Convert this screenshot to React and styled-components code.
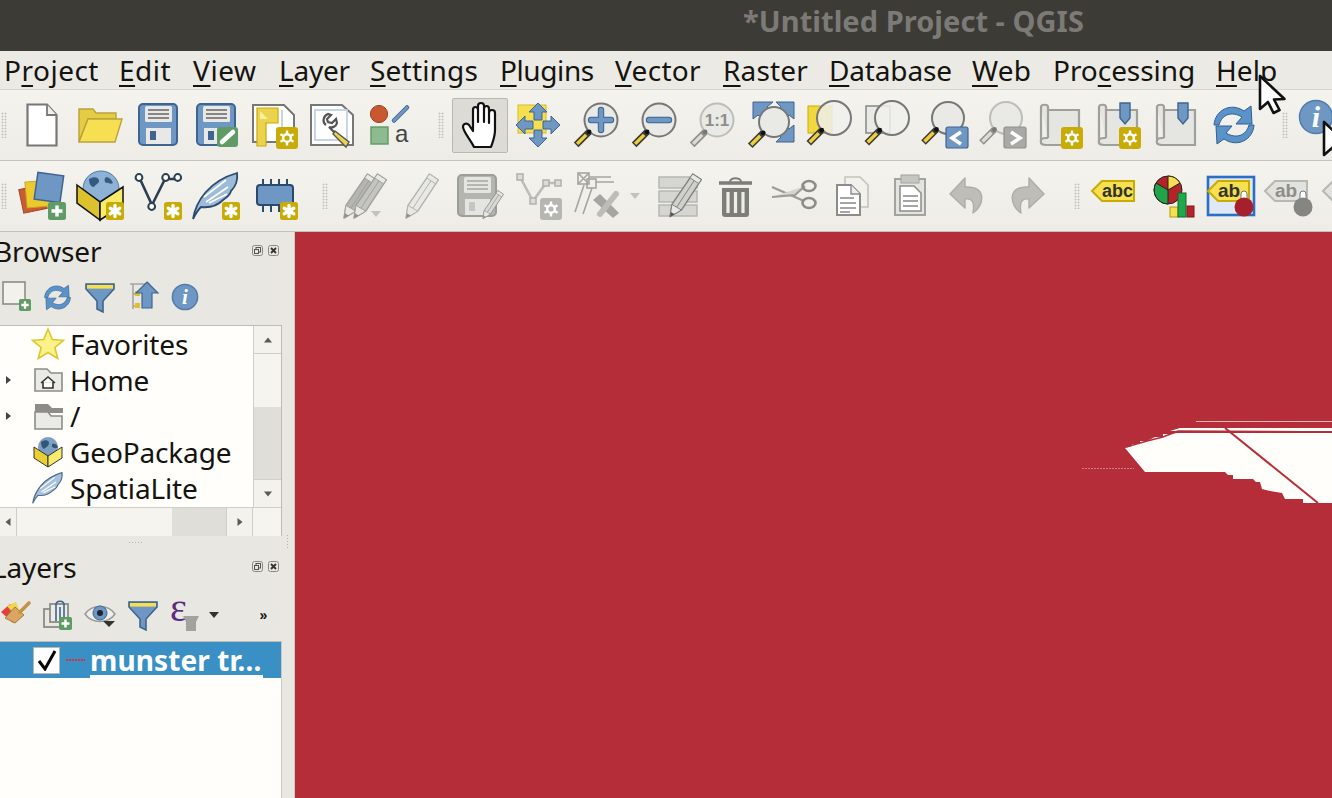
import React from "react";
import styled, { createGlobalStyle } from "styled-components";

const Global = createGlobalStyle`
  html, body { margin: 0; padding: 0; background: #e9e8e2; }
  body { font-family: "Noto Sans", "Open Sans", sans-serif; overflow: hidden; }
`;

const Win = styled.div`position: relative; width: 1332px; height: 798px; overflow: hidden; display: flex; flex-direction: column; background: #e9e8e2;`;
const TitleBar = styled.header`height: 51px; flex: none; background: #3c3b36; display: flex; align-items: center; padding: 0 0 10px 743px; box-sizing: border-box; color: #7b7a76; font: bold 29px "Noto Sans", sans-serif; white-space: nowrap; letter-spacing: 0.05px;`;
const MenuBar = styled.nav`height: 39px; flex: none; box-sizing: border-box; background: #ebeae4; border-bottom: 1px solid #d5d4ce; display: flex; align-items: center; padding-left: 4px; color: #14130f; font-size: 28px; white-space: nowrap;`;
const MenuItem = styled.span`width: ${p => p.$w}px; flex: none; display: block; letter-spacing: ${p => p.$ls}px;`;
const Key = styled.span`text-decoration: underline; text-decoration-thickness: 2px; text-underline-offset: 4px;`;
const ToolBar = styled.div`height: 71px; flex: none; box-sizing: border-box; display: flex; align-items: center; overflow: hidden; padding-left: 13px; position: relative; background: linear-gradient(#f4f3ee, #edece6); border-bottom: 1px solid #c3c2bc;`;
const ToolButton = styled.button`
  width: ${p => p.$w || 58}px; height: 56px; flex: none; margin: 0; padding: 0 0 0 4px; box-sizing: border-box;
  display: flex; align-items: center; font: inherit; background: transparent; border: 1px solid transparent;
`;
const ActiveTool = styled(ToolButton)`
  width: 56px; height: 55px; margin: 0 1px; padding-left: 3px;
  background: #dcdbd5; border-color: #b9b8b2; border-radius: 2px;
`;
const Sep = styled.span`flex: none; width: ${p => p.$w || 32}px; height: 28px; display: flex; padding-left: 19px; box-sizing: border-box;`;
const Grip = styled.i`display: block; width: 6px; height: 26px; margin: auto 0; background-image: radial-gradient(circle, #c6c5bf 0.9px, transparent 1.1px); background-size: 3px 3px;`;
const EdgeGrip = styled(Grip)`position: absolute; left: 1px; top: calc(50% - 13px);`;
const Caret = styled.i`display: block; flex: none; margin-left: ${p => p.$ml ?? 10}px; width: 0; height: 0; border-left: 5px solid transparent; border-right: 5px solid transparent; border-top: 6px solid ${p => p.$c || "#c3c2bd"};`;
const OverCaret = styled(Caret)`position: absolute; left: 35px; top: 42px; margin: 0;`;
const CaretTool = styled(ToolButton)`position: relative;`;

const Work = styled.main`flex: 1; display: flex; min-height: 0;`;
const Panel = styled.aside`width: 295px; flex: none; display: flex; flex-direction: column; background: #e8e7e1; border-right: 1px solid #c9c8c2; box-sizing: border-box;`;
const DockHead = styled.div`height: 40px; flex: none; width: 282px; display: flex; align-items: center; justify-content: space-between; box-sizing: border-box; padding-right: 3px; color: #14130f; font-size: 28px;`;
const DockTitle = styled.span`margin: -3px 0 0 ${p => p.$ml}px; letter-spacing: -0.15px;`;
const DockBtns = styled.span`display: flex; gap: 5px; margin-top: -4px;`;
const DockBtn = styled.svg`width: 11px; height: 11px; display: block;`;
const DockBar = styled.div`height: 53px; flex: none; display: flex; align-items: center; margin-left: -6px; width: 287px; padding-bottom: ${p => p.$pb || 0}px; box-sizing: border-box;`;
const DockTool = styled.span`width: 42.5px; flex: none; display: flex; justify-content: center;`;
const More = styled.span`margin-left: 41px; font: bold 14px "Liberation Sans", sans-serif; color: #111;`;
const TreeBox = styled.div`width: 282px; flex: none; box-sizing: border-box; height: 211px; background: #fffefb; border: 1px solid #bcbbb5; border-left: none; display: grid; grid-template-columns: 1fr 28px; grid-template-rows: 1fr 29px;`;
const TreeList = styled.ul`list-style: none; margin: 0; padding: 0; overflow: hidden;`;
const TreeRow = styled.li`height: 36px; display: flex; align-items: center; font-size: 28px; color: #14130f; letter-spacing: -0.15px; white-space: nowrap;`;
const Expander = styled.span`width: 32px; flex: none; display: flex; padding-left: 6px; box-sizing: border-box;`;
const Tri = styled.i`display: block; width: 0; height: 0; border-top: 4.5px solid transparent; border-bottom: 4.5px solid transparent; border-left: 5px solid #444;`;
const RowLabel = styled.span`margin-left: 6px;`;
const VScroll = styled.div`display: grid; grid-template-rows: 28px 53px 72px 1fr 28px; background: #f5f4ef; border-left: 1px solid #cfcec8;`;
const HScroll = styled.div`grid-column: 1 / 3; display: grid; grid-template-columns: 17px 155px 54px 27px 1fr; background: #f5f4ef; border-top: 1px solid #cfcec8;`;
const SBtn = styled.span`display: flex; align-items: center; justify-content: center; background: #f3f2ec; box-sizing: border-box; border: 0 solid #cfcec8; border-width: ${p => p.$b || "0"};`;
const SThumb = styled.span`background: #dfded8; display: block;`;
const STrack = styled.span`display: block;`;
const Splitter = styled.div`height: 12px; flex: none; display: flex; align-items: center;`;
const HDots = styled.i`display: block; margin-left: 128px; width: 16px; height: 3px; background-image: radial-gradient(circle, #b4b3ad 0.8px, transparent 1px); background-size: 3px 3px;`;
const VDots = styled.i`display: block; margin-left: auto; margin-right: 5px; width: 3px; height: 16px; background-image: radial-gradient(circle, #b4b3ad 0.8px, transparent 1px); background-size: 3px 3px;`;
const LayerTree = styled.div`flex: 1; width: 282px; background: #fffefb; border-top: 1px solid #bcbbb5; border-right: 1px solid #c9c8c2; box-sizing: border-box;`;
const LayerRow = styled.div`height: 36px; background: #3a8fc5; display: flex; align-items: center; padding-left: 33px; box-sizing: border-box;`;
const Check = styled.span`width: 27px; height: 27px; flex: none; box-sizing: border-box; background: #fff; border: 1px solid #b8b7b1; display: flex; align-items: center; justify-content: center;`;
const Legend = styled.i`display: block; width: 19px; height: 2px; margin-left: 6px; flex: none; background: repeating-linear-gradient(90deg, #b7414f 0 2px, #7f6aa8 2px 3px);`;
const LayerName = styled.span`margin: 3px 0 0 5px; width: 173px; flex: none; height: 33px; box-sizing: border-box; border-bottom: 3px solid #fff; color: #fff; font: bold 28px/31px "Noto Sans", sans-serif; letter-spacing: 0.1px; white-space: nowrap; overflow: hidden;`;
const Canvas = styled.section`flex: 1; background: #b52d38; min-width: 0;`;
const MapSvg = styled.svg`display: block; width: 100%; height: 100%;`;
const IconSvg = styled.svg`display: block; flex: none; width: ${p => p.$s}px; height: ${p => p.$s}px; overflow: visible;`;
const Pointer = styled.svg`position: absolute; left: ${p => p.$x}px; top: ${p => p.$y}px; width: 28px; height: 40px; overflow: visible;`;
const IconText = styled.text`font-family: "Liberation Sans", sans-serif; font-weight: ${p => p.$w || 700}; font-size: ${p => p.$s}px;`;
const SerifGlyph = styled.text`font-family: "Liberation Serif", serif; font-size: ${p => p.$s}px;`;

const BLUE = "#6e97c3", DBLUE = "#3f648f", YEL = "#f6e04f", BADGE = "#c9ab05", GRN = "#5f9b65", G = "#a9a9a5";

const I = ({ s = 48, v = 48, children }) => <IconSvg $s={s} viewBox={`0 0 ${v} ${v}`}>{children}</IconSvg>;

const StarB = ({ x = 30, y = 30, n = 18 }) => (
  <g transform={`translate(${x} ${y}) scale(${n / 18})`}>
    <rect width="18" height="18" rx="2.5" fill={BADGE} />
    <g stroke="#fff" strokeWidth="3.3" strokeLinecap="round">
      <line x1="9" y1="3.5" x2="9" y2="14.5" /><line x1="4.2" y1="6.2" x2="13.8" y2="11.8" /><line x1="4.2" y1="11.8" x2="13.8" y2="6.2" />
    </g>
  </g>
);
const GearB = ({ x = 26, y = 26, n = 22, c = BADGE }) => (
  <g transform={`translate(${x} ${y}) scale(${n / 22})`}>
    <rect width="22" height="22" rx="3" fill={c} />
    <g stroke="#fff" strokeWidth="2.4"><line x1="11" y1="3.5" x2="11" y2="18.5" /><line x1="4.5" y1="7.2" x2="17.5" y2="14.8" /><line x1="4.5" y1="14.8" x2="17.5" y2="7.2" /></g>
    <circle cx="11" cy="11" r="3.8" fill={c} stroke="#fff" strokeWidth="2.4" />
  </g>
);
const PlusB = ({ x = 30, y = 30, n = 18 }) => (
  <g transform={`translate(${x} ${y}) scale(${n / 18})`}>
    <rect width="18" height="18" rx="2.5" fill={GRN} />
    <path d="M9 3.5v11M3.5 9h11" stroke="#fff" strokeWidth="3.4" />
  </g>
);
const Lens = ({ x, y, r = 16.5, off, fill = "#e9e9e5", children }) => {
  const hx = x - r * 0.72, hy = y + r * 0.72;
  return (
    <g>
      <line x1={hx} y1={hy} x2={hx - 13} y2={hy + 13} stroke={off ? "#8f8f8b" : "#3a3a36"} strokeWidth="6.5" />
      <line x1={hx - 3} y1={hy + 3} x2={hx - 12} y2={hy + 12} stroke={off ? "#dcdcd8" : "#f0cf3c"} strokeWidth="3.4" />
      <circle cx={x} cy={y} r={r} fill={fill} stroke={off ? "#bdbdb9" : "#777"} strokeWidth="2" />
      <circle cx={hx} cy={hy} r="2.4" fill={off ? "#777" : "#111"} />
      {children}
    </g>
  );
};
const Disk = ({ c = BLUE, d = DBLUE, inner = "#e8e8e6", mark = DBLUE, line = "#666" }) => (
  <g>
    <rect x="5" y="3" width="38" height="41" rx="4" fill={c} stroke={d} strokeWidth="2" />
    <rect x="11" y="5" width="27" height="16" rx="1.5" fill={inner} />
    <path d="M14 9h21M14 13h21M14 17h21" stroke={line} strokeWidth="1.6" />
    <rect x="12" y="27" width="25" height="16" fill={inner} />
    <rect x="16" y="30" width="6" height="9" fill={mark} />
  </g>
);
const Scroll = () => (
  <path d="M5 6c0-3 7-3 7 0v3h31v35H10c-7 0-7-7 0-7h2M5 6v33M12 6v31" fill="#e5e5e1" stroke="#9f9f9b" strokeWidth="2.2" />
);
const RefreshArt = ({ c = "#5b92c9", d = "#2f5f94" }) => (
  <g fill={c} stroke={d} strokeWidth="1">
    <path d="M4 24C5 9 21 1 34 10l7-5 1 18H26l6-7C22 10 12 13 9 24Z" />
    <path d="M44 24C43 39 27 47 14 38l-7 5-1-18h16l-6 7c10 6 20 3 23-8Z" />
  </g>
);
const FilterArt = () => (
  <g>
    <path d="M2 3h28v5L19 20v11l-6-3v-8L2 8Z" fill={BLUE} stroke={DBLUE} strokeWidth="1.6" />
    <rect x="3" y="4" width="26" height="3.6" fill={YEL} />
  </g>
);
const InfoArt = ({ cx = 24, cy = 24, r = 16, fs = 28 }) => (
  <g>
    <circle cx={cx} cy={cy} r={r} fill={BLUE} stroke="#537bab" strokeWidth="1.5" />
    <text x={cx} y={cy + fs * 0.33} textAnchor="middle" fontFamily="Liberation Serif, serif" fontStyle="italic" fontWeight="700" fontSize={fs} fill="#fff">i</text>
  </g>
);
const FeatherArt = ({ fill = "#9dbcd9", s = "#2c4a6e" }) => (
  <g>
    <path d="M1 47C4 29 17 9 45 1c1 7-2 14-6 18-1 4-5 7-8 9-6 6-14 8-22 7-3 3-6 8-8 12Z" fill={fill} stroke={s} strokeWidth="1.8" />
    <path d="M14 30l22-15M17 31l18-9M12 25l22-17" stroke="#fff" strokeWidth="1.6" />
  </g>
);
const PencilArt = ({ x = 0, y = 0, k = 1, c = "#c5c5c1", d = "#a0a09c", tip = "#8f8f8b" }) => (
  <g transform={`translate(${x} ${y}) scale(${k})`}>
    <path d="M0 46L2 33L24 1L33 7L12 39Z" fill={c} stroke={d} strokeWidth="1.4" strokeLinejoin="round" />
    <path d="M7 36L28 4" stroke={d} strokeWidth="1" />
    <path d="M24 1L33 7L30 11L21 5Z" fill="#e8e8e4" stroke={d} strokeWidth="1" />
    <path d="M2 33l10 6-12 7Z" fill="#e8e8e4" stroke={d} strokeWidth="1" />
    <path d="M0 46l1-5 4 2.5Z" fill={tip} />
  </g>
);

/* top row */
const NewFile = () => <I><path d="M9.5 3.5H29L38.5 14v30.5h-29Z" fill="#fff" stroke="#777" strokeWidth="2.2" /><path d="M29 3.5V14h9.5" fill="#eee" stroke="#777" strokeWidth="1.8" /></I>;
const Folder = () => <I><path d="M3 41V8h14l3 4h20v6H12Z" fill="#e6cc45" stroke="#b9a23c" strokeWidth="1.4" /><path d="M3 41l9-23h34l-7 23Z" fill="#f6e052" stroke="#b9a23c" strokeWidth="1.4" /></I>;
const Save = () => <I><Disk /></I>;
const SaveAs = () => <I><Disk /><rect x="25" y="26" width="21" height="20" rx="3" fill={GRN} /><path d="M30 41l11-10" stroke="#fff" strokeWidth="4.5" strokeLinecap="round" /></I>;
const NewLayout = () => <I><path d="M3 4h31l10 10v27H3Z" fill="#fff" stroke="#777" strokeWidth="2" /><path d="M32 9v22" stroke="#c2d1e7" strokeWidth="1.8" /><path d="M7 7h21v15H16v23H7Z" fill="#ecd34e" stroke="#c9ab05" strokeWidth="1.2" /><path d="M10 10l8 8h-8Z" fill="#f8eda0" /><GearB x="26" y="26" /></I>;
const Manager = () => <I><path d="M3 4h31l11 10v30H3Z" fill="#fff" stroke="#777" strokeWidth="2" /><rect x="7" y="9" width="32" height="30" fill="none" stroke="#c2d1e7" strokeWidth="1.8" /><path d="M18 24c-4-3-3-9 2-11l3 1-4 4 1 3 4 1 4-4 1 4c-1 4-5 5-8 4l15 15" fill="none" stroke="#555" strokeWidth="2.2" /><path d="M27 30l14 11-3 5-13-13Z" fill="#ecd34e" stroke="#555" strokeWidth="1.4" /></I>;
const Style = () => <I><circle cx="13" cy="13" r="8.6" fill="#c9582f" stroke="#9a4426" strokeWidth="1" /><line x1="28" y1="19.5" x2="41" y2="6.5" stroke={DBLUE} strokeWidth="4.5" strokeLinecap="round" /><line x1="28" y1="19.5" x2="41" y2="6.5" stroke={BLUE} strokeWidth="2.8" strokeLinecap="round" /><rect x="5" y="26" width="17" height="17" fill="#8fb98f" stroke="#5f9b65" strokeWidth="1.4" /><IconText $s={24} $w={400} x="29" y="41" fill="#444">a</IconText></I>;
const Hand = () => <I><path d="M18 46C15 40 7 30 7 26c0-4 4-4 6-2l4 6V9c0-4 5-4 5 0v12V5c0-4 6-4 6 0v16V8c0-4 5-4 5 0v14V12c0-4 6-4 6 0v17c0 7-2 11-4 17Z" fill="#fff" stroke="#111" strokeWidth="2.2" strokeLinejoin="round" /></I>;
const PanSel = () => { const a = "M24 2l9 9h-5v8h-8v-8h-5Z"; return <I><rect x="4" y="4" width="28" height="28" fill={YEL} stroke="#d4b92f" strokeWidth="1" /><g fill={BLUE} stroke={DBLUE} strokeWidth="1"><path d={a} /><path d={a} transform="rotate(90 24 24)" /><path d={a} transform="rotate(180 24 24)" /><path d={a} transform="rotate(270 24 24)" /></g></I>; };
const ZoomIn = () => <I><Lens x={29} y={19}><path d="M29 9v20M19 19h20" stroke={DBLUE} strokeWidth="6.4" strokeLinecap="round" /><path d="M29 9v20M19 19h20" stroke={BLUE} strokeWidth="4.4" strokeLinecap="round" /></Lens></I>;
const ZoomOut = () => <I><Lens x={29} y={19}><path d="M19 19h20" stroke={DBLUE} strokeWidth="6.4" strokeLinecap="round" /><path d="M19 19h20" stroke={BLUE} strokeWidth="4.4" strokeLinecap="round" /></Lens></I>;
const Zoom11 = () => <I><Lens x={29} y={19} off><IconText $s={17} x="29" y="25" textAnchor="middle" fill="#8d8d89">1:1</IconText></Lens></I>;
const ZoomFull = () => <I><g fill={BLUE} stroke={DBLUE} strokeWidth="1"><path d="M7 1h20l-6 5 5 5-9 8-5-5-5 4Z" /><path d="M48 1H30l5 5-5 5 8 8 5-5 5 4Z" /><path d="M48 41H30l5-5-5-5 8-8 5 5 5-4Z" /></g><Lens x={28} y={21} r={15} /></I>;
const ZoomSel = () => <I><rect x="4" y="5" width="24" height="27" fill="#f0d83e" stroke="#c9ab05" strokeWidth="1" /><Lens x={30} y={17} r={17} fill="rgba(240,240,236,0.85)" /></I>;
const ZoomLayer = () => <I><rect x="4" y="5" width="24" height="27" fill="#e9e9e5" stroke="#8d8d89" strokeWidth="1.6" /><Lens x={30} y={17} r={17} fill="rgba(240,240,236,0.85)" /></I>;
const ZoomLast = () => <I><Lens x={28} y={17} r={16} /><rect x="26" y="26" width="22" height="21" rx="2" fill={BLUE} stroke={DBLUE} strokeWidth="1.2" /><path d="M41 31l-9 6 9 6" fill="none" stroke="#fff" strokeWidth="3.6" /></I>;
const ZoomNext = () => <I><Lens x={28} y={17} r={16} off /><rect x="26" y="26" width="22" height="21" rx="2" fill={G} stroke="#8f8f8b" strokeWidth="1.2" /><path d="M33 31l9 6-9 6" fill="none" stroke="#fff" strokeWidth="3.6" /></I>;
const NewMap = () => <I><Scroll /><GearB x={25} y={26} /></I>;
const NewMark = () => <I><Scroll /><path d="M26 2h10v15l-5 6-5-6Z" fill={BLUE} stroke={DBLUE} strokeWidth="1.4" /><GearB x={25} y={26} /></I>;
const Marks = () => <I><Scroll /><path d="M26 2h10v15l-5 6-5-6Z" fill={BLUE} stroke={DBLUE} strokeWidth="1.4" /></I>;
const Refresh = () => <I><RefreshArt /></I>;
const Info = () => <I><InfoArt cx={18} cy={16} r={16.5} fs={30} /></I>;

/* second row */
const AddLayers = () => <I><rect x="3" y="15" width="24" height="24" transform="rotate(-12 15 27)" fill="#cc5a30" stroke="#a4472a" /><rect x="8" y="9" width="24" height="26" transform="rotate(-5 20 22)" fill="#ecc92f" stroke="#c2a32b" /><rect x="18" y="2" width="26" height="27" transform="rotate(8 31 15)" fill={BLUE} stroke={DBLUE} strokeWidth="1.5" /><PlusB /></I>;
const GeoBox = () => <I><circle cx="25" cy="17" r="18" fill="#8eb2d6" stroke="#56789c" /><path d="M13 7c5-3 9-2 10 1 1 3-3 4-5 7-3 0-5-3-5-8ZM30 5c3 0 6 3 7 6-3 2-4-1-7 0-2-2-2-4 0-6Z" fill="#355a80" /><path d="M1 13l23 17v18L1 31Z" fill="#dcc22c" stroke="#111" strokeWidth="1.5" /><path d="M24 30l23-15v18L24 48Z" fill="#f9ec6c" stroke="#111" strokeWidth="1.5" /><StarB /></I>;
const NewVec = () => <I><path d="M6 7l12 26L31 7h11" fill="none" stroke="#2b3e52" strokeWidth="2.6" /><g fill="#fff" stroke="#2b3e52" strokeWidth="2"><circle cx="5" cy="5.5" r="3.4" /><circle cx="17.7" cy="34.5" r="3.4" /><circle cx="31.7" cy="5.5" r="3.4" /><circle cx="43.7" cy="5.5" r="3.4" /></g><StarB /></I>;
const Feather = () => <I><FeatherArt /><StarB /></I>;
const Chip = () => <I><path d="M13 7v6M21 7v6M29 7v6M37 7v6M13 33v7M21 33v7M29 33v7M37 33v7" stroke="#2a4a70" strokeWidth="2" /><rect x="7" y="13" width="36" height="20" rx="3" fill={BLUE} stroke="#2a4a70" strokeWidth="2" /><StarB /></I>;
const Pencils = () => <I><PencilArt x={4} y={1} k={0.98} c="#b5b5b1" /><PencilArt x={14} y={1} k={0.98} c="#c4c4c0" /></I>;
const Pencil = () => <I><PencilArt x={8} y={1} k={0.98} c="#e8e8e4" d="#b1b1ad" /></I>;
const SaveEdit = () => <I><g transform="translate(-3 0)"><Disk c="#b4b4b0" d="#9d9d99" inner="#e4e4e0" mark="#c5c5c1" line="#a5a5a1" /></g><PencilArt x={27} y={18} k={0.62} c="#d8d8d4" d="#8f8f8b" /></I>;
const NodeTool = () => <I><path d="M6 5l13 24L32 11h14" fill="none" stroke="#bcbcb8" strokeWidth="2.6" /><g fill="#dcdcd8" stroke="#b0b0ac" strokeWidth="1.5"><rect x="3" y="2" width="6" height="6" /><rect x="16" y="26" width="6" height="6" /><rect x="29" y="8" width="6" height="6" /><rect x="41" y="8" width="6" height="6" /></g><GearB x={26} y={26} c="#b6b6b2" /></I>;
const VertTool = () => <I><g stroke="#a5a5a1" strokeWidth="1.6" fill="none"><rect x="6" y="1" width="11" height="11" /><rect x="15" y="7" width="9" height="9" /><path d="M6 1l11 11M17 1L6 12M12 13L3 40M20 16L11 42M17 5h22M24 10h18" /></g><path d="M21 28l7-6 19 19-6 5Z" fill="#a5a5a1" /><path d="M44 22l-16 20" stroke="#bcbcb8" strokeWidth="6" strokeLinecap="round" /></I>;
const Attr = () => <I><g fill="#d5d5d1" stroke="#b6b6b2" strokeWidth="1.5"><rect x="5" y="5" width="38" height="11" /><rect x="5" y="19" width="38" height="11" /><rect x="5" y="33" width="38" height="11" /></g><PencilArt x={16} y={1} k={0.95} c="#d0d0cc" d="#7e7e7a" tip="#555" /></I>;
const Trash = () => <I><path d="M7 11h33" stroke="#7d7d79" strokeWidth="3.5" /><path d="M18 10c0-5 11-5 11 0" fill="none" stroke="#7d7d79" strokeWidth="2" /><path d="M10 16h27v26c0 2-1 3-3 3H13c-2 0-3-1-3-3Z" fill="#7d7d79" /><path d="M16 20v21M23.5 20v21M31 20v21" stroke="#efeee8" strokeWidth="3.2" /></I>;
const Scissors = () => <I><path d="M2 15l32 14" stroke="#9b9b97" strokeWidth="2.2" /><path d="M2 25l23-2 10-9" fill="#d5d5d1" stroke="#9b9b97" strokeWidth="2" /><ellipse cx="39" cy="14" rx="6.5" ry="5" fill="none" stroke="#8c8c88" strokeWidth="2.6" /><ellipse cx="39" cy="31" rx="6.5" ry="5" fill="none" stroke="#8c8c88" strokeWidth="2.6" /></I>;
const Copy = () => <I><path d="M17 5h15l8 8v22H17Z" fill="#f2f1ec" stroke="#c3c3bf" strokeWidth="1.6" /><path d="M9 13h14l9 9v21H9Z" fill="#fff" stroke="#8c8c88" strokeWidth="2" /><path d="M23 13v9h9" fill="#eee" stroke="#8c8c88" strokeWidth="1.4" /><path d="M12 26h14M12 31h16M12 36h16M12 40h10" stroke="#888" strokeWidth="1.3" /></I>;
const Paste = () => <I><rect x="9" y="7" width="30" height="36" fill="#e3e3df" stroke="#a2a29e" strokeWidth="2" /><rect x="15" y="3" width="18" height="8" fill="#c5c5c1" stroke="#a2a29e" /><path d="M14 14h14l7 7v18H14Z" fill="#fff" stroke="#8c8c88" strokeWidth="1.5" /><path d="M17 24h15M17 29h15M17 34h15" stroke="#888" strokeWidth="1.3" /></I>;
const UNDO = "M21 6L6 22L21 36V27C28 26 31 30 29 41C40 34 44 14 21 15Z";
const Undo = () => <I><path d={UNDO} fill="#bebdb8" stroke="#adada9" strokeWidth="1.4" strokeLinejoin="round" /></I>;
const Redo = () => <I><g transform="matrix(-1 0 0 1 48 0)"><path d={UNDO} fill="#bebdb8" stroke="#adada9" strokeWidth="1.4" strokeLinejoin="round" /></g></I>;
const Tag = ({ label, fill, s, tc, x = 2, w = 42, fs = 19 }) => (
  <g transform="translate(0 8)"><path d={`M${x} 11L${x + 10} 1h${w - 10}v20H${x + 10}Z`} fill={fill} stroke={s} strokeWidth="2" /><IconText $s={fs} x={x + 10} y="17" fill={tc}>{label}</IconText></g>
);
const Abc = () => <I><Tag label="abc" fill={YEL} s="#c9ab05" tc="#33322c" fs={18} /></I>;
const Diagram = () => <I><circle cx="20" cy="18" r="14" fill="#b3232a" stroke="#222" /><path d="M20 18V4a14 14 0 0 1 12 7Z" fill={YEL} stroke="#222" /><path d="M20 18L8 11A14 14 0 0 0 20 32Z" fill="#22a34a" stroke="#222" /><rect x="22" y="35" width="8" height="10" fill={YEL} stroke="#b89a0a" /><rect x="30" y="21" width="8" height="24" fill="#1fa84c" stroke="#11682e" /><rect x="39" y="34" width="7" height="11" fill="#b8232b" stroke="#7b181c" /></I>;
const Pin = ({ c, x }) => <g><rect x={x - 3} y="19" width="6" height="12" rx="3" fill="#fff" stroke="#777" /><circle cx={x} cy="35" r="9.5" fill={c} /></g>;
const PinLabel = () => <I><rect x="2" y="5" width="46" height="38" fill="#dfe8f4" stroke="#2b6fc4" strokeWidth="2.6" /><Tag label="ab" fill={YEL} s="#c9ab05" tc="#33322c" x={2} w={41} /><Pin c="#a61f2c" x={38} /></I>;
const GreyLabel = () => <I><Tag label="ab" fill="#e2e2de" s="#b8b8b4" tc="#8d8d89" x={1} w={42} /><Pin c="#858581" x={39} /></I>;
const ClipLabel = () => <I><Tag label="ab" fill="#e2e2de" s="#b8b8b4" tc="#8d8d89" x={1} w={42} /></I>;

/* panels */
const AddFav = () => <I s={32} v={32}><rect x="4" y="1" width="22" height="22" fill="#f2f1ec" stroke="#8c8c88" strokeWidth="1.6" /><PlusB x={20} y={18} n={12} /></I>;
const Refresh32 = () => <I s={31}><RefreshArt /></I>;
const Filter32 = ({ s = 32 }) => <I s={s} v={32}><FilterArt /></I>;
const Collapse = () => <I s={32} v={32}><path d="M3 3h20M6 3v25M6 13h7M6 25h7" stroke="#a5a5a1" strokeWidth="1.6" fill="none" /><rect x="8" y="10" width="5" height="5" fill="#e5bd2b" /><rect x="8" y="22" width="5" height="5" fill="#e5bd2b" /><path d="M20 1l11 11h-6v15h-10V12H9Z" fill={BLUE} stroke={DBLUE} strokeWidth="1.2" /></I>;
const Info28 = () => <I s={32} v={32}><InfoArt cx={16} cy={16} r={12.6} fs={21} /></I>;
const StarT = () => <I s={32} v={32}><path d="M16 1l4.3 10.5 11.2.8-8.6 7.2 2.8 11L16 24.5 6.3 30.5l2.8-11L.5 12.3l11.2-.8Z" fill="#fbf28a" stroke="#dcc62c" strokeWidth="1.6" /></I>;
const HomeT = () => <I s={32} v={32}><path d="M3 5h12l4 4h11v18H3Z" fill="#ebebe6" stroke="#8c8c88" strokeWidth="1.6" /><path d="M9 19l7-6 7 6M11 18v6h10v-6" fill="#fff" stroke="#333" strokeWidth="1.6" /></I>;
const RootT = () => <I s={32} v={32}><path d="M3 4h13l4 4h11v5H3Z" fill="#8c8c88" /><path d="M3 12h13l3 4h11v13H3Z" fill="#ebebe6" stroke="#8c8c88" strokeWidth="1.6" /></I>;
const GeoT = () => <I s={32} v={32}><circle cx="16" cy="11" r="10" fill="#7e9fc4" /><path d="M9 6c4-3 8-2 8 1s-3 4-5 6c-2-1-3-4-3-7ZM20 8c3-1 5 1 6 3-2 2-4 1-6 0Z" fill="#34557a" /><path d="M2 11l14 9v11L2 22Z" fill="#e9cf32" stroke="#333" /><path d="M16 20l14-9v11l-14 9Z" fill="#f9ec6c" stroke="#333" /></I>;
const FeatherT = () => <I s={32}><FeatherArt fill="#a9c2dc" s="#4f6d90" /></I>;
const Brush = () => <I s={32} v={32}><path d="M2 13l9-8 6 5-3 14Z" fill="#e2403a" /><path d="M8 7l9-4 3 8-6 3Z" fill="#f1d54a" /><path d="M6 19l10-11 9 8-9 8Z" fill="#d9a663" stroke="#a97b3c" /><path d="M21 13l9-9" stroke="#c49346" strokeWidth="3.6" strokeLinecap="round" /></I>;
const AddGroup = () => <I s={32} v={32}><rect x="2" y="10" width="18" height="18" fill="none" stroke="#8c8c88" strokeWidth="1.8" /><rect x="8" y="5" width="18" height="18" fill="#ecebe6" stroke="#8c8c88" strokeWidth="1.8" /><path d="M14 22V6c0-5 8-5 8 0v15c0 3-4 3-4 0V8" fill="none" stroke={DBLUE} strokeWidth="1.6" /><PlusB x={17} y={18} n={13} /></I>;
const Eye = () => <I s={32} v={32}><path d="M1 15C8 5 24 5 31 15 24 25 8 25 1 15Z" fill="#f0efea" stroke="#9b9b97" strokeWidth="1.6" /><circle cx="16" cy="14" r="7" fill={BLUE} stroke={DBLUE} /><circle cx="16" cy="14" r="3" fill="#223" /><path d="M19 22h12l-6 6Z" fill="#333" /></I>;
const Expr = () => <I s={32} v={32}><SerifGlyph $s={40} x="1" y="22" fill="#5c2c7e">ε</SerifGlyph><path d="M14 17h16l-3 6v9h-10v-9Z" fill="#a2a29e" /></I>;

const ToolRow1 = [NewFile, Folder, Save, SaveAs, NewLayout, Manager, Style];
const ToolRow2 = [PanSel, ZoomIn, ZoomOut, Zoom11, ZoomFull, ZoomSel, ZoomLayer, ZoomLast, ZoomNext, NewMap, NewMark, Marks, Refresh];

const Tools = ({ list }) => list.map((C, i) => <ToolButton key={i}><C /></ToolButton>);

const Dock = () => (
  <DockBtns>
    <DockBtn viewBox="0 0 11 11"><rect x=".5" y=".5" width="10" height="10" rx="2" fill="none" stroke="#8a8983" /><rect x="4" y="2.5" width="4.5" height="4.5" fill="none" stroke="#55544f" /><rect x="2.5" y="4.5" width="4" height="4" fill="#e8e7e1" stroke="#55544f" /></DockBtn>
    <DockBtn viewBox="0 0 11 11"><rect x=".5" y=".5" width="10" height="10" rx="2" fill="none" stroke="#8a8983" /><path d="M3 3l5 5M8 3L3 8" stroke="#33322e" strokeWidth="1.8" /></DockBtn>
  </DockBtns>
);
const Arrow = ({ d }) => <svg width="10" height="10" viewBox="0 0 10 10"><path d={d} fill="#5a5a56" /></svg>;

const menu = [
  ["P", "r", "oject", 115, 0.5], ["", "E", "dit", 74, 0.45], ["", "V", "iew", 86, 0.6], ["", "L", "ayer", 91, -0.25], ["", "S", "ettings", 130, 0.2],
  ["", "P", "lugins", 115, -0.4], ["", "V", "ector", 108, 0.3], ["", "R", "aster", 106, 0.15], ["", "D", "atabase", 143, -0.15], ["", "W", "eb", 81, 0.3],
  ["Pro", "c", "essing", 163, -0.05], ["", "H", "elp", 100, 0.1],
];

const Cursor = ({ x, y }) => (
  <Pointer $x={x} $y={y} viewBox="0 0 28 40"><path d="M1 1v33l8-7 5.5 11 6-3L15 24.5l10.5-.5Z" fill="#fff" stroke="#111" strokeWidth="2.6" strokeLinejoin="round" /></Pointer>
);

export default function App() {
  return (
    <Win>
      <Global />
      <TitleBar>*Untitled Project - QGIS</TitleBar>
      <MenuBar>
        {menu.map(([a, k, b, w, ls], i) => (
          <MenuItem key={i} $w={w} $ls={ls}>{a}<Key>{k}</Key>{b}</MenuItem>
        ))}
      </MenuBar>
      <ToolBar>
        <EdgeGrip />
        <Tools list={ToolRow1} />
        <Sep><Grip /></Sep>
        <ActiveTool><Hand /></ActiveTool>
        <Tools list={ToolRow2} />
        <Sep $w={30}><Grip /></Sep>
        <ToolButton><Info /></ToolButton>
      </ToolBar>
      <ToolBar>
        <EdgeGrip />
        <Tools list={[AddLayers, GeoBox, NewVec, Feather, Chip]} />
        <Sep><Grip /></Sep>
        <CaretTool><Pencils /><OverCaret /></CaretTool>
        <Tools list={[Pencil, SaveEdit, NodeTool]} />
        <ToolButton $w={82}><VertTool /><Caret $ml={10} /></ToolButton>
        <Tools list={[Attr, Trash, Scissors, Copy, Paste, Undo, Redo]} />
        <Sep $w={30}><Grip /></Sep>
        <Tools list={[Abc, Diagram, PinLabel, GreyLabel, ClipLabel]} />
      </ToolBar>
      <Work>
        <Panel>
          <DockHead><DockTitle $ml={-6}>Browser</DockTitle><Dock /></DockHead>
          <DockBar $pb={3}>
            <DockTool><AddFav /></DockTool><DockTool><Refresh32 /></DockTool><DockTool><Filter32 /></DockTool><DockTool><Collapse /></DockTool><DockTool><Info28 /></DockTool>
          </DockBar>
          <TreeBox>
            <TreeList>
              <TreeRow><Expander /><StarT /><RowLabel>Favorites</RowLabel></TreeRow>
              <TreeRow><Expander><Tri /></Expander><HomeT /><RowLabel>Home</RowLabel></TreeRow>
              <TreeRow><Expander><Tri /></Expander><RootT /><RowLabel>/</RowLabel></TreeRow>
              <TreeRow><Expander /><GeoT /><RowLabel>GeoPackage</RowLabel></TreeRow>
              <TreeRow><Expander /><FeatherT /><RowLabel>SpatiaLite</RowLabel></TreeRow>
            </TreeList>
            <VScroll>
              <SBtn $b="0 0 1px 0"><Arrow d="M5 2.5L9 7.5H1Z" /></SBtn>
              <STrack /><SThumb /><STrack />
              <SBtn $b="1px 0 0 0"><Arrow d="M1 2.5H9L5 7.5Z" /></SBtn>
            </VScroll>
            <HScroll>
              <SBtn $b="0 1px 0 0"><Arrow d="M2.5 5L7.5 1V9Z" /></SBtn>
              <STrack /><SThumb />
              <SBtn $b="0 1px 0 1px"><Arrow d="M7.5 5L2.5 1V9Z" /></SBtn>
              <STrack />
            </HScroll>
          </TreeBox>
          <Splitter><HDots /><VDots /></Splitter>
          <DockHead><DockTitle $ml={-8}>Layers</DockTitle><Dock /></DockHead>
          <DockBar>
            <DockTool><Brush /></DockTool><DockTool><AddGroup /></DockTool><DockTool><Eye /></DockTool><DockTool><Filter32 /></DockTool><DockTool><Expr /></DockTool>
            <Caret $ml={2} $c="#333" />
            <More>»</More>
          </DockBar>
          <LayerTree>
            <LayerRow>
              <Check><svg width="22" height="22" viewBox="0 0 22 22"><path d="M3 12l6 8L19 2" fill="none" stroke="#000" strokeWidth="3" /></svg></Check>
              <Legend />
              <LayerName>munster tr...</LayerName>
            </LayerRow>
          </LayerTree>
        </Panel>
        <Canvas>
          <MapSvg viewBox="295 232 1037 566" preserveAspectRatio="none">
            <path d="M1125 448L1145 472H1225L1228 475L1233 475V479H1253L1256 482H1260L1262 489L1270 491L1282 493L1285 499L1303 499V503H1332V433H1177L1170 434H1163V437H1155L1147 441H1140V444H1132V446Z" fill="#fffefb" />
            <path d="M1170 431L1180 428H1332V431H1180Z" fill="#fffefb" />
            <path d="M1196 421.5H1332" stroke="#e8b5b8" strokeWidth="1" />
            <path d="M1082 468.5H1134" stroke="#cf7c84" strokeWidth="1" strokeDasharray="2 1" />
            <path d="M1126 447L1147 441L1163 437L1178 431L1332 432" fill="none" stroke="#b52d38" strokeWidth="1.6" />
            <path d="M1225 428L1318 503" stroke="#b52d38" strokeWidth="2" />
          </MapSvg>
        </Canvas>
      </Work>
      <Cursor x={1259} y={75} />
      <Cursor x={1323} y={121} />
    </Win>
  );
}
